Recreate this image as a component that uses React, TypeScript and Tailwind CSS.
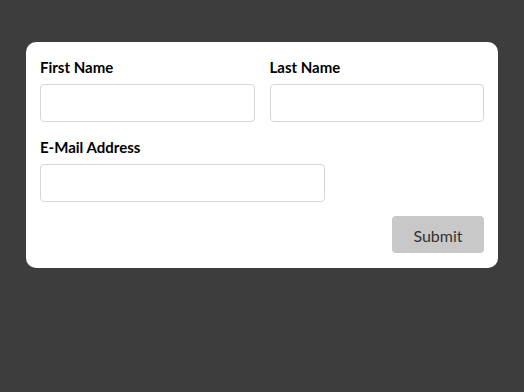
export default function App() {
  return (
    <div className="min-h-screen bg-[#3d3d3d] pt-[42px] px-[26px]" style={{ fontFamily: "Lato, 'Noto Sans', sans-serif" }}>
      <form className="bg-white rounded-[10px] px-[14px] pt-[15px] pb-[15px]">
        {/* Name row */}
        <div className="grid grid-cols-2 gap-[15px]">
          <div>
            <label className="block text-[15px] leading-[20px] font-bold text-black">First Name</label>
            <input className="mt-[7px] block w-full h-[38px] rounded-[4px] border border-[#d6d6d6] outline-none" />
          </div>
          <div>
            <label className="block text-[15px] leading-[20px] font-bold text-black">Last Name</label>
            <input className="mt-[7px] block w-full h-[38px] rounded-[4px] border border-[#d6d6d6] outline-none" />
          </div>
        </div>

        <div className="mt-[15px]">
          <label className="block text-[15px] leading-[20px] font-bold text-black">E-Mail Address</label>
          <input className="mt-[7px] block w-[285px] h-[38px] rounded-[4px] border border-[#d6d6d6] outline-none" />
        </div>

        <div className="mt-[14px] flex justify-end">
          <button type="button" className="w-[92px] h-[37px] pt-[2px] rounded-[4px] bg-[#c8c8c8] text-[16px] text-[#333]">
            Submit
          </button>
        </div>
      </form>
    </div>
  );
}
